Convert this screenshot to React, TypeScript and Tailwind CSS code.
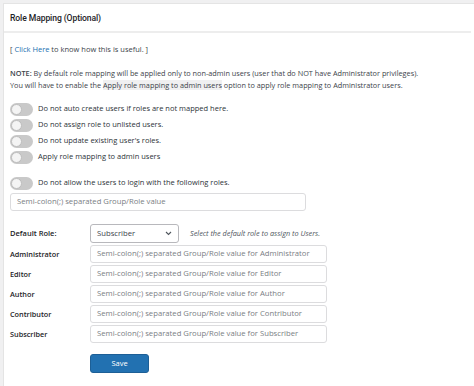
import React from "react";

const Toggle = () => (
  <div className="relative w-[23px] h-[13px] rounded-full bg-[#c9c9c9] shrink-0">
    <div className="absolute left-[1px] top-[1px] w-[11px] h-[11px] rounded-full bg-[#f4f4f4] border border-[#bdbdbd]" />
  </div>
);

const ToggleRow = ({ label }: { label: string }) => (
  <div className="flex items-center gap-[5px] h-[16px]">
    <Toggle />
    <span className="text-[7.5px] text-[#2c3338]">{label}</span>
  </div>
);

const roles = ["Administrator", "Editor", "Author", "Contributor", "Subscriber"];

export default function App() {
  return (
    <div
      className="w-[474px] h-[386px] bg-[#f0f0f1] pt-[3px] pl-[3px] overflow-hidden"
      style={{ fontFamily: '"Open Sans", "Noto Sans", sans-serif' }}
    >
      <div className="bg-white h-[383px] border-l border-t border-[#e4e4e4]">
        <div className="h-[29px] flex items-center px-[6px] border-b-2 border-[#ededed] mr-[3px]">
          <h2
            className="text-[8.6px] font-medium tracking-[-0.1px] text-[#1d2327] leading-none pt-[1px]"
            style={{ fontFamily: 'Roboto, "Open Sans", sans-serif' }}
          >
            Role Mapping (Optional)
          </h2>
        </div>
        <div className="px-[6px] text-[#3c434a]">
          <p className="text-[7.5px] mt-[10px] leading-[12px]">
            [ <span className="text-[#2271b1]">Click Here</span> to know how this is useful. ]
          </p>
          <div className="text-[7.3px] leading-[12px] mt-[12px]">
            <p>
              <b className="font-semibold">NOTE:</b> By default role mapping will be applied only to non-admin users (user that do NOT have Administrator privileges).
            </p>
            <p>
              You will have to enable the <span className="bg-[#f0f0f1]">Apply role mapping to admin users</span> option to apply role mapping to Administrator users.
            </p>
          </div>
          <div className="mt-[10px] flex flex-col">
            <ToggleRow label="Do not auto create users if roles are not mapped here." />
            <ToggleRow label="Do not assign role to unlisted users." />
            <ToggleRow label="Do not update existing user's roles." />
            <ToggleRow label="Apply role mapping to admin users" />
          </div>
          <div className="mt-[10px]">
            <ToggleRow label="Do not allow the users to login with the following roles." />
          </div>
          <div className="mt-[2px] w-[296px] h-[18px] border border-[#dcdcde] rounded-[3px] flex items-center px-[6px] text-[7.7px] text-[#7a7e84]">
            Semi-colon(;) separated Group/Role value
          </div>
          <div className="mt-[13px] flex flex-col gap-[2px]">
            <div className="flex items-center h-[19px]">
              <span className="w-[80px] text-[7.5px] font-semibold text-[#1d2327]">Default Role:</span>
              <div className="w-[89px] h-[19px] border border-[#b8b8bc] rounded-[3px] flex items-center justify-between pl-[6px] pr-[6px] text-[7.7px] text-[#3c434a]">
                <span>Subscriber</span>
                <svg width="7" height="5" viewBox="0 0 7 5" fill="none">
                  <path d="M1 1L3.5 3.5L6 1" stroke="#50575e" strokeWidth="1.1" />
                </svg>
              </div>
              <span className="ml-[11px] text-[7.3px] italic text-[#50575e]">Select the default role to assign to Users.</span>
            </div>
            {roles.map((r) => (
              <div key={r} className="flex items-center h-[18px]">
                <span className="w-[80px] text-[7.3px] font-semibold text-[#1d2327]">{r}</span>
                <div className="w-[237px] h-[18px] border border-[#dcdcde] rounded-[3px] flex items-center px-[6px] text-[7.7px] text-[#7a7e84]">
                  Semi-colon(;) separated Group/Role value for {r}
                </div>
              </div>
            ))}
          </div>
          <div className="mt-[5px] ml-[80px]">
            <button className="w-[59px] h-[19px] bg-[#2271b1] rounded-[3px] text-white text-[7.5px] border border-[#1d5f96]">
              Save
            </button>
          </div>
        </div>
      </div>
    </div>
  );
}
